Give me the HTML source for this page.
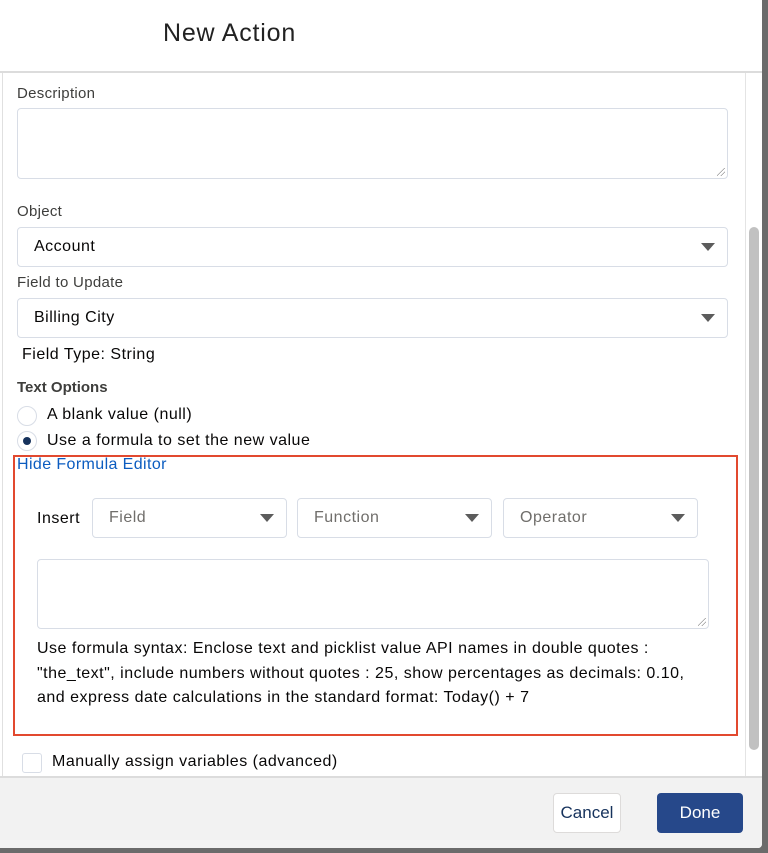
<!DOCTYPE html>
<html><head><style>
*{box-sizing:border-box;margin:0;padding:0}
body{width:768px;height:853px;position:relative;background:#6b6b6b;font-family:"Liberation Sans",sans-serif;color:#16325c;overflow:hidden}
.a{position:absolute}
.modal{left:0;top:0;width:762px;height:848px;background:#fff;border-radius:0 0 4px 0;overflow:hidden}
.lbl{font-size:15px;color:#3e3e3c;letter-spacing:0.3px}
.box{position:absolute;border:1px solid #d8dde6;border-radius:4px;background:#fff}
.sel{font-size:16px;color:#080707;padding-left:16px;display:flex;align-items:center;letter-spacing:0.5px}
.sel.g{color:#706e6b}
.tri{position:absolute;right:12px;top:50%;margin-top:-4px;width:0;height:0;border-left:7px solid transparent;border-right:7px solid transparent;border-top:8px solid #5c5c5c}
.t{font-size:16px;color:#080707;letter-spacing:0.5px}
.grip{position:absolute;right:2px;bottom:2px;width:8px;height:8px;background:linear-gradient(135deg,transparent 45%,#999 45%,#999 52%,transparent 52%,transparent 70%,#999 70%,#999 77%,transparent 77%)}
</style></head><body>
<div class="a modal">
 <div class="a" style="left:163px;top:19px;font-size:25px;color:#222;letter-spacing:0.8px">New Action</div>
 <div class="a" style="left:0;top:71px;width:762px;height:2px;background:#dcdcdc"></div>
 <div class="a" style="left:2px;top:73px;width:1px;height:704px;background:#e0e0e0"></div>
 <div class="a" style="left:745px;top:73px;width:1px;height:704px;background:#e4e4e4"></div>
 <div class="a" style="left:749px;top:227px;width:10px;height:523px;background:#c1c1c1;border-radius:5px"></div>

 <div class="a lbl" style="left:17px;top:85px">Description</div>
 <div class="box" style="left:17px;top:108px;width:711px;height:71px"><div class="grip"></div></div>
 <div class="a lbl" style="left:17px;top:203px">Object</div>
 <div class="box sel" style="left:17px;top:227px;width:711px;height:40px">Account<div class="tri"></div></div>
 <div class="a lbl" style="left:17px;top:274px">Field to Update</div>
 <div class="box sel" style="left:17px;top:298px;width:711px;height:40px">Billing City<div class="tri"></div></div>
 <div class="a t" style="left:22px;top:346px">Field Type: String</div>
 <div class="a" style="left:17px;top:379px;font-size:15px;font-weight:bold;color:#3e3e3c">Text Options</div>
 <div class="a" style="left:17px;top:406px;width:20px;height:20px;border:1px solid #d8dde6;border-radius:50%"></div>
 <div class="a t" style="left:47px;top:406px">A blank value (null)</div>
 <div class="a" style="left:17px;top:431px;width:20px;height:20px;border:1px solid #d8dde6;border-radius:50%"><div style="margin:5px;width:8px;height:8px;border-radius:50%;background:#16325c"></div></div>
 <div class="a t" style="left:47px;top:432px">Use a formula to set the new value</div>

 <div class="a" style="left:13px;top:455px;width:725px;height:281px;border:2px solid #e2492f"></div>
 <div class="a" style="left:17px;top:456px;font-size:16px;color:#0b5cc0;letter-spacing:0.4px">Hide Formula Editor</div>
 <div class="a t" style="left:37px;top:510px">Insert</div>
 <div class="box sel g" style="left:92px;top:498px;width:195px;height:40px">Field<div class="tri"></div></div>
 <div class="box sel g" style="left:297px;top:498px;width:195px;height:40px">Function<div class="tri"></div></div>
 <div class="box sel g" style="left:503px;top:498px;width:195px;height:40px">Operator<div class="tri"></div></div>
 <div class="box" style="left:37px;top:559px;width:672px;height:70px"><div class="grip"></div></div>
 <div class="a t" style="left:37px;top:637px;line-height:24.5px;width:700px;white-space:nowrap">Use formula syntax: Enclose text and picklist value API names in double quotes :<br>"the_text", include numbers without quotes : 25, show percentages as decimals: 0.10,<br>and express date calculations in the standard format: Today() + 7</div>

 <div class="a" style="left:22px;top:753px;width:20px;height:20px;border:1px solid #d8dde6;border-radius:3px"></div>
 <div class="a t" style="left:52px;top:753px">Manually assign variables (advanced)</div>

 <div class="a" style="left:0;top:776px;width:762px;height:72px;background:#f2f2f2;border-top:2px solid #dcdcdc"></div>
 <div class="a" style="left:553px;top:793px;width:68px;height:40px;background:#fff;border:1px solid #dddbda;border-radius:4px;font-size:17px;color:#16325c;display:flex;align-items:center;justify-content:center">Cancel</div>
 <div class="a" style="left:657px;top:793px;width:86px;height:40px;background:#26488a;border-radius:4px;font-size:17px;color:#fff;display:flex;align-items:center;justify-content:center">Done</div>
</div>
</body></html>
